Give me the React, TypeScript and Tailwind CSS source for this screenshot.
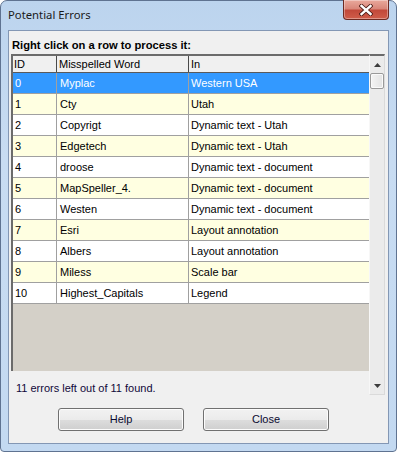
import React from "react";

const rows: [string, string, string][] = [
  ["0", "Myplac", "Western USA"],
  ["1", "Cty", "Utah"],
  ["2", "Copyrigt", "Dynamic text - Utah"],
  ["3", "Edgetech", "Dynamic text - Utah"],
  ["4", "droose", "Dynamic text - document"],
  ["5", "MapSpeller_4.", "Dynamic text - document"],
  ["6", "Westen", "Dynamic text - document"],
  ["7", "Esri", "Layout annotation"],
  ["8", "Albers", "Layout annotation"],
  ["9", "Miless", "Scale bar"],
  ["10", "Highest_Capitals", "Legend"],
];

const sans = "font-['Liberation_Sans',Arial,sans-serif]";

export default function App() {
  return (
    <div className="w-[397px] h-[452px] bg-white">
      <div className="relative w-[397px] h-[452px] rounded-t-[7px] rounded-b-[4px] border border-[#5f7391] bg-[linear-gradient(180deg,#bcd4ee_0%,#c8dcf2_35%,#c3d9f1_100%)] flex flex-col">
        {/* title bar */}
        <div className="h-[29px] flex items-center pl-[7px] pb-[1px]">
          <span className="font-['Noto_Sans',sans-serif] text-[11.3px] text-[#1b1b1b] leading-none">Potential Errors</span>
        </div>
        {/* close button */}
        <div className="absolute top-[-1px] right-[7px] w-[46px] h-[20px] rounded-b-[4px] border border-[#6d2a22] border-t-0 bg-[linear-gradient(180deg,#e9a99c_0%,#d9877a_45%,#c2493a_55%,#cf5d4a_100%)] flex items-center justify-center shadow-[inset_0_0_0_1px_rgba(255,255,255,0.35)]">
          <svg width="14" height="12" viewBox="0 0 14 12">
            <path d="M2.5 2 L11.5 10 M11.5 2 L2.5 10" stroke="#4a1a14" strokeWidth="4.2" strokeLinecap="square" />
            <path d="M2.5 2 L11.5 10 M11.5 2 L2.5 10" stroke="#ffffff" strokeWidth="2.4" strokeLinecap="square" />
          </svg>
        </div>
        {/* client area */}
        <div className={`ml-[7px] w-[381px] h-[414px] border border-[#8397b4] bg-[#f0f0f0] flex flex-col ${sans} text-[11px] text-[#000]`}>
          <div className="h-[23px] pt-[8px] pl-[3px] leading-[13px] font-bold text-[11.2px]">Right click on a row to process it:</div>
          <div className="ml-[2px] w-[374px] h-[341px] flex">
            <div className="w-[358px] flex flex-col">
              <div className="h-[317px] border-t-2 border-l-2 border-[#6b6b6b] bg-[#d4d0c8] flex flex-col">
                <div className="h-[17px] shrink-0 flex border-b border-[#5a5a5a] bg-[#f0f0f0] leading-[16px]">
                  <div className="w-[44px] border-r border-[#4a4a4a] pl-[1px]">ID</div>
                  <div className="w-[132px] border-r border-[#4a4a4a] pl-[2px]">Misspelled Word</div>
                  <div className="flex-1 pl-[2px]">In</div>
                </div>
                {rows.map((r, i) => {
                  const sel = i === 0;
                  const bg = sel ? "bg-[#3399ff] text-white" : i % 2 === 1 ? "bg-[#ffffe1]" : "bg-white";
                  return (
                    <div key={i} className={`h-[21px] shrink-0 flex border-b border-[#a0a0a0] leading-[20px] ${bg}`}>
                      <div className="w-[44px] border-r border-[#a0a0a0] pl-[2px]">{r[0]}</div>
                      <div className="w-[132px] border-r border-[#a0a0a0] pl-[3px]">{r[1]}</div>
                      <div className="flex-1 pl-[2px]">{r[2]}</div>
                    </div>
                  );
                })}
              </div>
              <div className="pl-[5px] pt-[11px] leading-[13px] text-[#10083a]">11 errors left out of 11 found.</div>
            </div>
            <div className="w-[16px] h-[341px] border-t-2 border-t-[#6b6b6b] border-r border-b border-r-[#dadada] border-b-[#dadada] border-l border-l-[#f7f7f7] bg-[#ebebeb] flex flex-col items-center">
              <div className="h-[17px] flex items-center justify-center pt-[1px]">
                <svg width="7" height="4" viewBox="0 0 7 4"><path d="M3.5 0 L7 4 L0 4 Z" fill="#3c3c3c" /></svg>
              </div>
              <div className="w-[14px] h-[16px] rounded-[2px] border border-[#9a9a9a] bg-[linear-gradient(90deg,#f4f4f4,#e3e3e3)] shadow-[inset_0_0_0_1px_#fafafa]" />
              <div className="flex-1" />
              <div className="h-[17px] flex items-center justify-center">
                <svg width="7" height="4" viewBox="0 0 7 4"><path d="M0 0 L7 0 L3.5 4 Z" fill="#3c3c3c" /></svg>
              </div>
            </div>
          </div>
          <div className="mt-[13px] flex pl-[49px] gap-[19px]">
            <button className="w-[126px] h-[23px] rounded-[3px] border border-[#707070] bg-[linear-gradient(180deg,#f2f2f2_0%,#ebebeb_50%,#dddddd_51%,#cfcfcf_100%)] shadow-[inset_0_0_0_1px_#fcfcfc] text-[11px] text-[#0a0a30]">Help</button>
            <button className="w-[126px] h-[23px] rounded-[3px] border border-[#707070] bg-[linear-gradient(180deg,#f2f2f2_0%,#ebebeb_50%,#dddddd_51%,#cfcfcf_100%)] shadow-[inset_0_0_0_1px_#fcfcfc] text-[11px] text-[#0a0a30]">Close</button>
          </div>
        </div>
      </div>
    </div>
  );
}
